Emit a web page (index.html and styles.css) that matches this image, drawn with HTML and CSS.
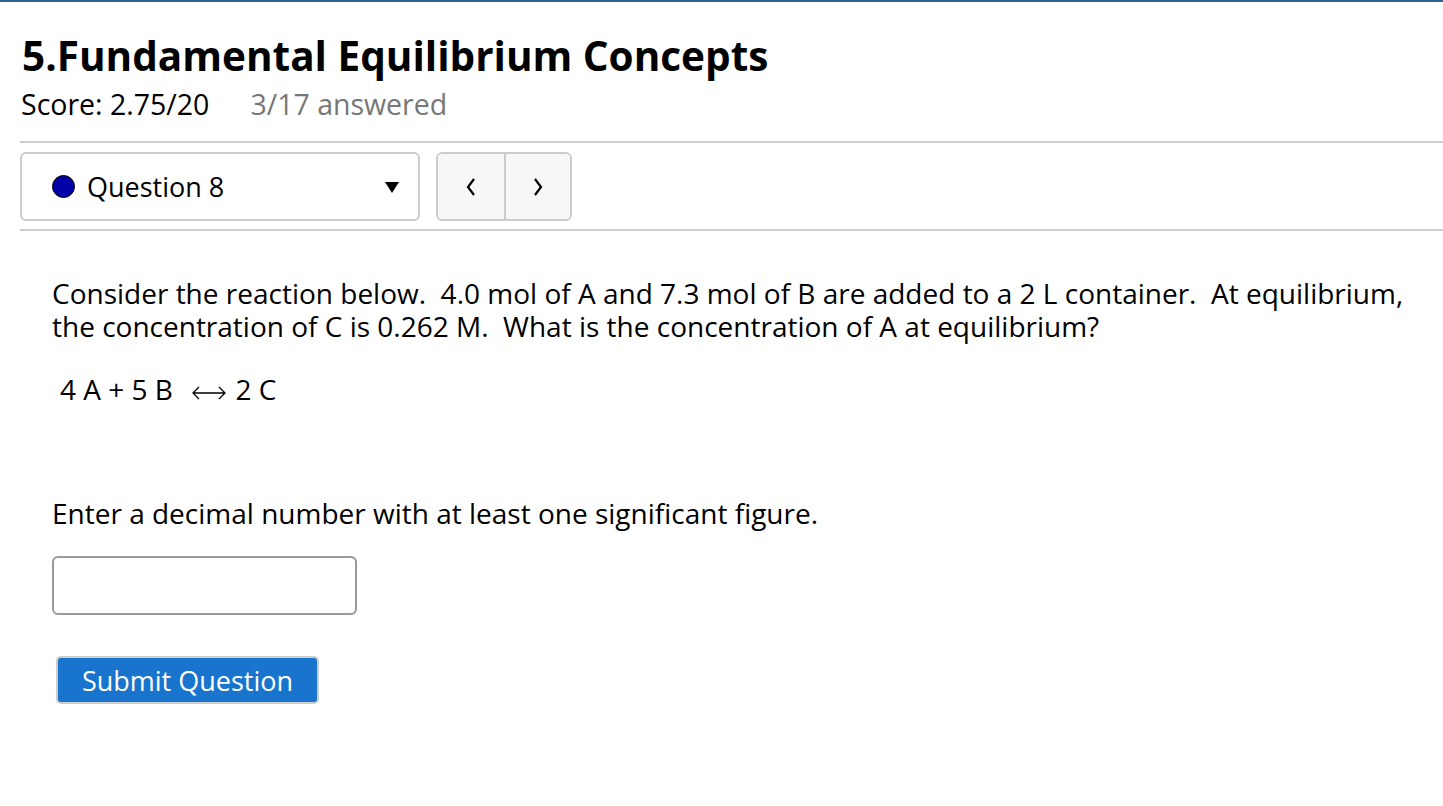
FILE: index.html
```html
<!DOCTYPE html>
<html lang="en">
<head>
    <meta charset="UTF-8">
    <title>5.Fundamental Equilibrium Concepts</title>
    <link rel="stylesheet" href="styles.css">
</head>
<body>
    <div class="topbar"></div>
    <div class="page">
        <h1 class="title">5.Fundamental Equilibrium Concepts</h1>
        <div class="score-line">
            <span class="score">Score: 2.75/20</span>
            <span class="answered">3/17 answered</span>
        </div>
        <div class="question-nav">
            <div class="question-select">
                <span class="status-dot"></span>
                <span class="select-label">Question 8</span>
                <svg class="caret" width="14" height="12" viewBox="0 0 14 12"><path d="M0 1 H14 L7 12 Z" fill="#000"/></svg>
            </div>
            <div class="prev-next">
                <button class="nav-btn" type="button">
                    <svg width="14" height="20" viewBox="0 0 14 20"><path d="M10 2 L4 10 L10 18" fill="none" stroke="#000" stroke-width="2.2"/></svg>
                </button>
                <button class="nav-btn" type="button">
                    <svg width="14" height="20" viewBox="0 0 14 20"><path d="M4 2 L10 10 L4 18" fill="none" stroke="#000" stroke-width="2.2"/></svg>
                </button>
            </div>
        </div>
        <div class="question">
            <p class="question-text">Consider the reaction below.&nbsp; 4.0 mol of A and 7.3 mol of B are added to a 2 L container.&nbsp; At equilibrium, the concentration of C is 0.262 M.&nbsp; What is the concentration of A at equilibrium?</p>
            <p class="reaction">4 A + 5 B
                <svg class="arrow" width="34" height="16" viewBox="0 0 34 16"><path d="M7 2 L1 8 L7 14 M1 8 H33 M27 2 L33 8 L27 14" fill="none" stroke="#000" stroke-width="1.3"/></svg>
                2 C</p>
            <p class="hint">Enter a decimal number with at least one significant figure.</p>
            <input class="answer" type="text">
            <div>
                <button class="submit" type="button">Submit Question</button>
            </div>
        </div>
    </div>
</body>
</html>
```
FILE: styles.css
```css
body {
    margin: 0;
    font-family: "Open Sans", "DejaVu Sans", sans-serif;
    color: #000;
    background: #fff;
}
.topbar {
    height: 2px;
    background: #2f6395;
}
.page {
    padding-left: 20px;
}
.title {
    margin: 0;
    padding-top: 26px;
    font-size: 40.5px;
    line-height: 56px;
    font-weight: bold;
    padding-left: 2px;
}
.score-line {
    display: flex;
    gap: 41px;
    font-size: 28.5px;
    line-height: 34px;
    margin-top: 3px;
    padding-left: 1px;
}
.answered {
    color: #777;
}
.question-nav {
    display: flex;
    gap: 16px;
    border-top: 2px solid #ccc;
    border-bottom: 2px solid #ccc;
    padding: 9px 0 8px;
    margin-top: 20px;
}
.question-select {
    width: 366px;
    height: 65px;
    border: 2px solid #ccc;
    border-radius: 6px;
    display: flex;
    align-items: center;
    padding-left: 30px;
    font-size: 27px;
}
.status-dot {
    width: 21px;
    height: 21px;
    border-radius: 50%;
    background: #0000a8;
    border: 1.5px solid #000;
    margin-right: 12px;
}
.select-label {
    flex: 1;
}
.caret {
    margin-right: 19px;
}
.prev-next {
    display: flex;
    border: 2px solid #ccc;
    border-radius: 6px;
    overflow: hidden;
    background: #f7f7f7;
}
.nav-btn {
    width: 66px;
    height: 65px;
    border: none;
    background: #f7f7f7;
    display: flex;
    align-items: center;
    justify-content: center;
    padding: 0;
}
.nav-btn + .nav-btn {
    border-left: 2px solid #ccc;
}
.question {
    padding: 46px 0 0 32px;
    font-size: 28px;
    line-height: 33px;
}
.question p {
    margin: 0;
}
.reaction {
    margin-top: 30px !important;
    padding-left: 8px;
}
.arrow {
    vertical-align: -1px;
    margin: 0 2px 0 12px;
}
.hint {
    margin-top: 91px !important;
}
.answer {
    display: block;
    margin-top: 26px;
    width: 305px;
    height: 59px;
    box-sizing: border-box;
    border: 2px solid #999;
    border-radius: 6px;
    font-size: 24px;
}
.submit {
    margin: 41px 0 0 4px;
    width: 263px;
    height: 48px;
    background: #1874cd;
    color: #fff;
    border: 2px solid #ccc;
    border-radius: 5px;
    font-family: "Open Sans", "DejaVu Sans", sans-serif;
    font-size: 27px;
    padding: 0;
}
```
